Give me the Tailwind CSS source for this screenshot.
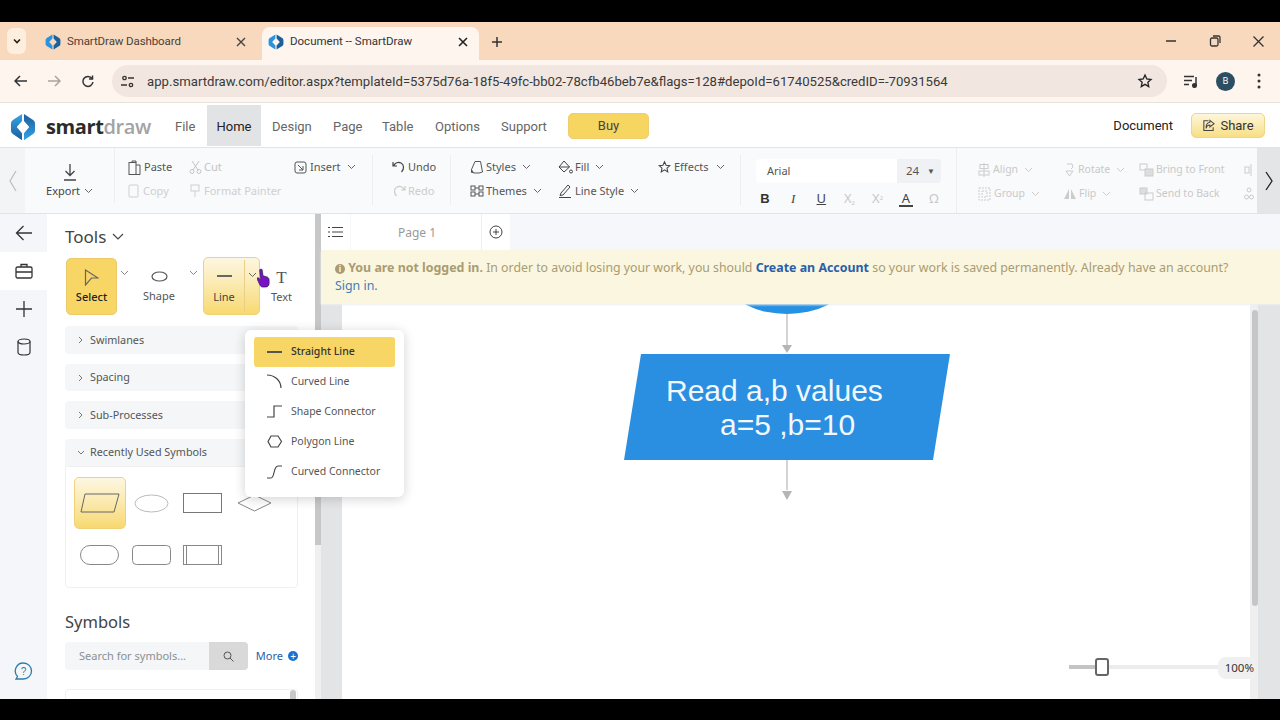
<!DOCTYPE html>
<html lang="en">
<head>
  <meta charset="UTF-8">
  <meta name="viewport" content="width=device-width, initial-scale=1.0">
  <title>Document -- SmartDraw</title>
  <script src="https://cdn.jsdelivr.net/npm/@tailwindcss/browser@4"></script>
</head>
<body class="bg-black">
  <div class="w-[1280px] h-[720px] overflow-hidden relative flex flex-col bg-black pt-[22px] pb-[21px] font-['Noto_Sans',sans-serif] text-[#444]">

    <!-- browser tabs -->
    <div class="h-[38px] shrink-0 bg-[#f8d9bd] flex items-end pl-[7px] text-[11.500px] text-[#333] font-['Roboto',sans-serif]">
      <div class="w-[19px] h-[26px] mb-[6px] rounded-md bg-[#fdeedd] flex items-center justify-center">
        <svg width="10" height="10" viewBox="0 0 10 10" fill="none" stroke="#222" stroke-width="1.600"><path d="M2 3.500l3 3 3-3"/></svg>
      </div>
      <div class="w-[236px] h-[33px] flex items-center pl-[19px] pr-[16px] pb-[4px]">
        <svg width="16" height="16" viewBox="0 0 27 32" preserveAspectRatio="none"><path d="M12.500 1 3 8Q1 9.500 1 12v8q0 2.500 2 4l9.500 7v-8L7 16l5.500-7z" fill="#2b93dc"/><path d="M14.500 1 24 8q2 1.500 2 4v8q0 2.500-2 4l-9.500 7v-8L20 16l-5.500-7z" fill="#1c5f9f"/></svg>
        <span class="ml-[6px] flex-1 text-[#4b4036] tracking-[-0.1px]">SmartDraw Dashboard</span>
        <svg width="10" height="10" viewBox="0 0 10 10" stroke="#444" stroke-width="1.400"><path d="M1 1l8 8M9 1l-8 8"/></svg>
      </div>
      <div class="w-[217px] h-[33px] bg-[#fdf5ee] rounded-t-lg flex items-center pl-[6px] pr-[11px] pb-[4px]">
        <svg width="16" height="16" viewBox="0 0 27 32" preserveAspectRatio="none"><path d="M12.500 1 3 8Q1 9.500 1 12v8q0 2.500 2 4l9.500 7v-8L7 16l5.500-7z" fill="#2b93dc"/><path d="M14.500 1 24 8q2 1.500 2 4v8q0 2.500-2 4l-9.500 7v-8L20 16l-5.500-7z" fill="#1c5f9f"/></svg>
        <span class="ml-[6px] flex-1">Document -- SmartDraw</span>
        <svg width="10" height="10" viewBox="0 0 10 10" stroke="#222" stroke-width="1.600"><path d="M1 1l8 8M9 1l-8 8"/></svg>
      </div>
      <div class="h-[33px] flex items-center ml-[12px] pb-[4px]">
        <svg width="12" height="12" viewBox="0 0 12 12" stroke="#333" stroke-width="1.500"><path d="M6 1v10M1 6h10"/></svg>
      </div>
      <div class="ml-auto h-[38px] flex items-center">
        <svg class="mr-[33px]" width="10" height="2" viewBox="0 0 10 2"><path d="M0 1h10" stroke="#333" stroke-width="1.500"/></svg>
        <svg class="mr-[32px]" width="12" height="12" viewBox="0 0 12 12" fill="none" stroke="#333" stroke-width="1.300"><rect x="1.500" y="3" width="7.500" height="8" rx="1.500"/><path d="M4 1h5.500a1.500 1.500 0 0 1 1.500 1.500V8"/></svg>
        <svg class="mr-[16px]" width="11" height="11" viewBox="0 0 11 11" stroke="#333" stroke-width="1.300"><path d="M.5.500l10 10M10.500.500l-10 10"/></svg>
      </div>
    </div>

    <!-- address bar -->
    <div class="h-[43px] shrink-0 bg-[#fdf5ee] flex items-center border-b border-[#e6e2de] pl-[14px]">
      <svg width="13" height="12" viewBox="0 0 13 12" fill="none" stroke="#333" stroke-width="1.500"><path d="M13 6H1.500M6 1 1 6l5 5"/></svg>
      <svg class="ml-[21px]" width="13" height="12" viewBox="0 0 13 12" fill="none" stroke="#a9a4a0" stroke-width="1.500"><path d="M0 6h11.500M7 1l5 5-5 5"/></svg>
      <svg class="ml-[20px]" width="13" height="13" viewBox="0 0 13 13" fill="none" stroke="#333" stroke-width="1.500"><path d="M11 3.500a5 5 0 1 0 .9 3.500"/><path d="M11.500.500v3.500H8"/></svg>
      <div class="ml-[18px] w-[1055px] h-[32px] rounded-full bg-[#f1e7e0] flex items-center pl-[9px] pr-[14px] text-[13.170px] text-[#3a3a3a] font-['Roboto',sans-serif]">
        <svg width="13" height="13" viewBox="0 0 13 13" fill="none" stroke="#333" stroke-width="1.300"><circle cx="3.500" cy="3" r="1.700"/><path d="M7 3h6M0 10h6"/><circle cx="10" cy="10" r="1.700"/></svg>
        <span class="ml-[13px] flex-1 pt-[1px]">app.smartdraw.com/editor.aspx?templateId=5375d76a-18f5-49fc-bb02-78cfb46beb7e&amp;flags=128#depoId=61740525&amp;credID=-70931564</span>
        <svg width="16" height="16" viewBox="0 0 24 24" fill="none" stroke="#222" stroke-width="2"><path d="M12 3l2.700 6 6.300.7-4.700 4.300 1.300 6.500L12 17l-5.600 3.500L7.700 14 3 9.700 9.300 9z"/></svg>
      </div>
      <svg class="ml-[17px]" width="15" height="13" viewBox="0 0 15 13" stroke="#333" stroke-width="1.500" fill="none"><path d="M0 1.500h10M0 5.500h8M0 9.500h5M12 2v8"/><circle cx="10.500" cy="10.500" r="1.800" fill="#333"/></svg>
      <div class="ml-[17px] w-[19px] h-[19px] rounded-full bg-[#2c4e63] text-white text-[9px] flex items-center justify-center">B</div>
      <svg class="ml-[22px]" width="4" height="16" viewBox="0 0 4 16" fill="#333"><circle cx="2" cy="2" r="1.500"/><circle cx="2" cy="8" r="1.500"/><circle cx="2" cy="14" r="1.500"/></svg>
    </div>

    <!-- app menu -->
    <div class="h-[45px] shrink-0 bg-white flex pt-[2px] pb-[1px] border-b border-[#e4e4e4] text-[13px] text-[#666] font-['Roboto',sans-serif]">
      <div class="w-[175px] flex items-center pl-[10px] pt-[2px]">
        <svg width="26" height="28" viewBox="0 0 27 32" preserveAspectRatio="none">
          <defs>
            <linearGradient id="logoLeft" x1="0" y1="0" x2="0" y2="1"><stop offset="0" stop-color="#35a4e8"/><stop offset="1" stop-color="#1b5c9c"/></linearGradient>
            <linearGradient id="logoRight" x1="0" y1="0" x2="0" y2="1"><stop offset="0" stop-color="#1b5c9c"/><stop offset="1" stop-color="#35a4e8"/></linearGradient>
          </defs>
          <path d="M12.500 1 3 8Q1 9.500 1 12v8q0 2.500 2 4l9.500 7v-8L7 16l5.500-7z" fill="url(#logoLeft)"/>
          <path d="M14.500 1 24 8q2 1.500 2 4v8q0 2.500-2 4l-9.500 7v-8L20 16l-5.500-7z" fill="url(#logoRight)"/>
        </svg>
        <span class="ml-[10px] text-[20px] font-bold leading-none font-['Open_Sans',sans-serif] tracking-[-0.4px] text-[#2b2b2b]">smart<span class="text-[#a3a3a3] font-semibold">draw</span></span>
      </div>
      <div class="w-[32px] flex items-center pt-[2px]">File</div>
      <div class="w-[54px] flex items-center justify-center pt-[2px] bg-[#e2e3e5] text-[#222]">Home</div>
      <div class="w-[72px] flex items-center pl-[11px] pt-[2px]">Design</div>
      <div class="w-[49px] flex items-center pt-[2px]">Page</div>
      <div class="w-[53px] flex items-center pt-[2px]">Table</div>
      <div class="w-[66px] flex items-center pt-[2px]">Options</div>
      <div class="w-[67px] flex items-center pt-[2px]">Support</div>
      <div class="flex items-center"><div class="w-[81px] h-[26px] rounded-[5px] bg-[#f6d560] border border-[#f0cd6e] flex items-center justify-center text-[#444]">Buy</div></div>
      <div class="ml-auto flex items-center text-[#222]">Document</div>
      <div class="flex items-center ml-[18px] mr-[15px]">
        <div class="w-[74px] h-[25px] rounded-[5px] bg-gradient-to-b from-[#fdf6dc] to-[#f8de82] border border-[#eed687] flex items-center justify-center gap-[5px] text-[#333]">
          <svg width="13" height="13" viewBox="0 0 14 14" fill="none" stroke="#444" stroke-width="1.100"><path d="M7 2H2v10.500h10V9"/><path d="M8.500 1.500 13 5 8.500 8.500V6.500C6 6.500 5 8 4.500 10 4 6.500 5.500 3.800 8.500 3.500z"/></svg>Share
        </div>
      </div>
    </div>

    <!-- ribbon -->
    <div class="h-[66px] shrink-0 bg-[#f9fafb] flex border-b border-[#e4e4e4] text-[11px] text-[#444]">
      <div class="w-[25px] bg-[#f3f4f6] flex items-center justify-center">
        <svg width="8" height="22" viewBox="0 0 8 22" fill="none" stroke="#bbb" stroke-width="1.200"><path d="M7 1 1 11l6 10"/></svg>
      </div>
      <div class="w-[90px] flex flex-col items-center pt-[15px] border-r border-[#eeeeee] mb-[10px]">
        <svg width="14" height="18" viewBox="0 0 14 18" fill="none" stroke="#444" stroke-width="1.300"><path d="M7 1v11M2.500 8 7 12.500 11.500 8M1 17h12"/></svg>
        <span class="mt-[2px] flex items-center gap-[4px]">Export <svg width="9" height="6" viewBox="0 0 9 6" fill="none" stroke="#666"><path d="M1 1l3.500 3.500L8 1"/></svg></span>
      </div>
      <!-- paste group -->
      <div class="w-[258px] flex border-r border-[#eeeeee] mt-[7px] mb-[8px]">
        <div class="w-[179px] grid grid-cols-[61px_1fr] grid-rows-[24px_24px] pl-[13px]">
          <div class="flex items-center gap-[3px] text-[#555]"><svg width="13" height="15" viewBox="0 0 13 15" fill="none" stroke="#555" stroke-width="1"><rect x="1" y="2.500" width="7" height="12"/><path d="M4 2.500V1h4v1.500M8 5h4v9.500H8"/></svg>Paste</div>
          <div class="flex items-center gap-[2px] text-[#c4c4c4]"><svg width="13" height="14" viewBox="0 0 13 14" fill="none" stroke="#c4c4c4"><circle cx="3" cy="11.500" r="2"/><circle cx="10" cy="11.500" r="2"/><path d="M4 10 10 1M9 10 3 1"/></svg>Cut</div>
          <div class="flex items-center gap-[4px] text-[#cfcfcf]"><svg width="11" height="14" viewBox="0 0 11 14" fill="none" stroke="#cfcfcf"><rect x="1" y="1" width="9" height="12" rx="1"/></svg>Copy</div>
          <div class="flex items-center gap-[4px] text-[#cfcfcf] ml-[1px]"><svg width="10" height="14" viewBox="0 0 10 14" fill="none" stroke="#cfcfcf"><rect x="1" y="1" width="8" height="6"/><path d="M5 7v6"/></svg>Format Painter</div>
        </div>
        <div class="h-[24px] flex items-center gap-[3px] text-[#555]">
          <svg width="13" height="13" viewBox="0 0 13 13" fill="none" stroke="#555"><rect x="1" y="1" width="11" height="11" rx="2"/><path d="M4 4l5 5M9 5v4H5"/></svg>Insert
          <svg class="ml-[3px]" width="9" height="6" viewBox="0 0 9 6" fill="none" stroke="#666"><path d="M1 1l3.500 3.500L8 1"/></svg>
        </div>
      </div>
      <!-- undo -->
      <div class="w-[78px] flex flex-col pl-[19px] border-r border-[#eeeeee] mt-[7px] mb-[8px]">
        <div class="h-[24px] flex items-center gap-[2px] text-[#555]"><svg width="14" height="14" viewBox="0 0 14 14" fill="none" stroke="#444" stroke-width="1.200"><path d="M1 2v4h4M1.500 6C3 3 6 1.500 9 3c3 1.500 3.500 6 .500 9"/></svg>Undo</div>
        <div class="h-[24px] flex items-center gap-[2px] text-[#cccccc]"><svg width="14" height="14" viewBox="0 0 14 14" fill="none" stroke="#ccc" stroke-width="1.200"><path d="M13 2v4H9M12.500 6C11 3 8 1.500 5 3 2 4.500 1.500 9 4.500 12"/></svg>Redo</div>
      </div>
      <!-- styles -->
      <div class="w-[290px] grid grid-cols-[88px_99px_1fr] grid-rows-[24px_24px] pl-[19px] mt-[7px] mb-[8px] border-r border-[#eeeeee] text-[#555]">
        <div class="flex items-center gap-[2px]"><svg width="14" height="14" viewBox="0 0 14 14" fill="none" stroke="#555"><path d="M5 1.500h5.500L12.500 12 9 13H3.500L1.500 9.500z"/><path d="M1.500 9.500v3h2"/></svg>Styles<svg class="ml-[4px]" width="9" height="6" viewBox="0 0 9 6" fill="none" stroke="#666"><path d="M1 1l3.500 3.500L8 1"/></svg></div>
        <div class="flex items-center gap-[2px]"><svg width="15" height="14" viewBox="0 0 15 14" fill="none" stroke="#444"><path d="M6 1 1 7l5 5 5.500-5z"/><path d="M1 7h10.500"/><circle cx="13" cy="11.500" r="1.500"/></svg>Fill<svg class="ml-[4px]" width="9" height="6" viewBox="0 0 9 6" fill="none" stroke="#666"><path d="M1 1l3.500 3.500L8 1"/></svg></div>
        <div class="flex items-center gap-[2px]"><svg width="15" height="14" viewBox="0 0 24 24" fill="none" stroke="#444" stroke-width="1.800"><path d="M12 3l2.700 6 6.300.7-4.700 4.300 1.300 6.500L12 17l-5.600 3.500L7.700 14 3 9.700 9.300 9z"/></svg>Effects<svg class="ml-[6px]" width="9" height="6" viewBox="0 0 9 6" fill="none" stroke="#666"><path d="M1 1l3.500 3.500L8 1"/></svg></div>
        <div class="flex items-center gap-[2px]"><svg width="14" height="14" viewBox="0 0 14 14" fill="none" stroke="#555"><rect x="1" y="2" width="4" height="4"/><rect x="9" y="2" width="4" height="4"/><rect x="1" y="8" width="4" height="4"/><rect x="9" y="8" width="4" height="4"/><path d="M5 4h4M5 10h4"/></svg>Themes<svg class="ml-[4px]" width="9" height="6" viewBox="0 0 9 6" fill="none" stroke="#666"><path d="M1 1l3.500 3.500L8 1"/></svg></div>
        <div class="flex items-center gap-[2px]"><svg width="15" height="14" viewBox="0 0 15 14" fill="none" stroke="#444"><path d="M3 9 10 1l2 2-7 8-3 .5zM1 13.500h12"/></svg>Line Style<svg class="ml-[4px]" width="9" height="6" viewBox="0 0 9 6" fill="none" stroke="#666"><path d="M1 1l3.500 3.500L8 1"/></svg></div>
      </div>
      <!-- font -->
      <div class="w-[216px] pl-[15px] pt-[11px] border-r border-[#eeeeee] text-[#555]">
        <div class="flex h-[24px] w-[185px] items-center">
          <div class="w-[141px] h-full bg-white rounded-l-[4px] flex items-center pl-[11px]">Arial</div>
          <div class="w-[44px] h-full bg-[#eff1f4] rounded-r-[4px] flex items-center pl-[9px] pr-[6px] justify-between text-[11.500px]">24<span class="text-[8px]">▼</span></div>
        </div>
        <div class="flex mt-[6px] h-[20px] w-[185px] items-center justify-between pl-[2px] text-[13px]">
          <span class="w-[14px] text-center font-bold font-['Liberation_Sans',sans-serif] text-[#333]">B</span>
          <span class="w-[14px] text-center italic font-['Liberation_Serif',serif] text-[#444]">I</span>
          <span class="w-[14px] text-center underline text-[#444]">U</span>
          <span class="w-[14px] text-center text-[#c8c8c8]">X<sub class="text-[6px]">2</sub></span>
          <span class="w-[14px] text-center text-[#c8c8c8]">X<sup class="text-[6px]">2</sup></span>
          <span class="w-[14px] text-center text-[#444] border-b-2 border-[#444] leading-[14px]">A</span>
          <span class="w-[14px] text-center text-[#c8c8c8]">Ω</span>
        </div>
      </div>
      <!-- arrange, disabled -->
      <div class="flex-1 grid grid-cols-[86px_75px_105px_1fr] grid-rows-[24px_24px] pl-[21px] pt-[10px] text-[#c9c9c9] text-[10.500px] overflow-hidden">
        <div class="flex items-center gap-[3px]"><svg width="12" height="14" viewBox="0 0 12 14" fill="none" stroke="#ccc"><rect x="2" y="1.500" width="8" height="4"/><rect x="1" y="8" width="10" height="4"/><path d="M6 0v14"/></svg>Align<svg class="ml-[3px]" width="9" height="6" viewBox="0 0 9 6" fill="none" stroke="#ccc"><path d="M1 1l3.500 3.500L8 1"/></svg></div>
        <div class="flex items-center gap-[3px]"><svg width="11" height="14" viewBox="0 0 11 14" fill="none" stroke="#ccc"><path d="M3 1h5l1 3-2 2"/><path d="M2 8l3.500 5L9 8z"/></svg>Rotate<svg class="ml-[3px]" width="9" height="6" viewBox="0 0 9 6" fill="none" stroke="#ccc"><path d="M1 1l3.500 3.500L8 1"/></svg></div>
        <div class="flex items-center gap-[2px]"><svg width="15" height="14" viewBox="0 0 15 14" fill="none" stroke="#ccc"><rect x="1" y="1" width="7" height="6"/><rect x="6" y="6" width="8" height="7" fill="#ddd"/></svg>Bring to Front</div>
        <div class="flex items-center"><svg width="10" height="14" viewBox="0 0 10 14" fill="none" stroke="#ccc"><rect x="1" y="4" width="4" height="6"/><path d="M7 1v12"/></svg></div>
        <div class="flex items-center gap-[3px]"><svg width="13" height="14" viewBox="0 0 13 14" fill="none" stroke="#ccc" stroke-dasharray="2 1"><rect x="1" y="1" width="11" height="12"/><rect x="4" y="4" width="5" height="6"/></svg>Group<svg class="ml-[3px]" width="9" height="6" viewBox="0 0 9 6" fill="none" stroke="#ccc"><path d="M1 1l3.500 3.500L8 1"/></svg></div>
        <div class="flex items-center gap-[3px]"><svg width="12" height="12" viewBox="0 0 12 12" fill="#ccc"><path d="M5 1v10H0zM7 1l5 10H7z"/></svg>Flip<svg class="ml-[3px]" width="9" height="6" viewBox="0 0 9 6" fill="none" stroke="#ccc"><path d="M1 1l3.500 3.500L8 1"/></svg></div>
        <div class="flex items-center gap-[2px]"><svg width="15" height="14" viewBox="0 0 15 14" fill="none" stroke="#ccc"><rect x="1" y="1" width="7" height="6" fill="#ddd"/><rect x="6" y="6" width="8" height="7"/></svg>Send to Back</div>
        <div class="flex items-center"><svg width="10" height="14" viewBox="0 0 10 14" fill="none" stroke="#ccc"><circle cx="5" cy="3" r="2"/><circle cx="2.500" cy="10" r="2"/><circle cx="7.500" cy="10" r="2"/></svg></div>
      </div>
      <div class="w-[23px] bg-[#e4e5e7] flex items-center justify-center">
        <svg width="8" height="20" viewBox="0 0 8 20" fill="none" stroke="#222" stroke-width="1.300"><path d="M1 1l6 9-6 9"/></svg>
      </div>
    </div>

    <!-- work area -->
    <div class="flex-1 flex min-h-0 relative bg-white">
      <!-- rail -->
      <div class="w-[47px] bg-[#f4f6f9] flex flex-col shrink-0">
        <div class="h-[38px] flex items-center justify-center"><svg width="18" height="16" viewBox="0 0 18 16" fill="none" stroke="#333" stroke-width="1.300"><path d="M17 8H1.500M8.500 1l-7 7 7 7"/></svg></div>
        <div class="h-[38px] bg-white flex items-center justify-center"><svg width="18" height="16" viewBox="0 0 18 16" fill="none" stroke="#333" stroke-width="1.300"><rect x="1" y="4" width="16" height="11" rx="1.500"/><path d="M6 4V1.500h6V4M1 9h16"/></svg></div>
        <div class="h-[38px] flex items-center justify-center"><svg width="16" height="16" viewBox="0 0 16 16" stroke="#333" stroke-width="1.300"><path d="M8 0v16M0 8h16"/></svg></div>
        <div class="h-[38px] flex items-center justify-center"><svg width="14" height="18" viewBox="0 0 14 18" fill="none" stroke="#333" stroke-width="1.200"><ellipse cx="7" cy="3.500" rx="6" ry="2.500"/><path d="M1 3.500v11c0 1.500 3 2.500 6 2.500s6-1 6-2.500v-11"/></svg></div>
        <div class="mt-auto h-[37px] flex justify-center"><svg width="19" height="19" viewBox="0 0 19 19" fill="none" stroke="#2b7ca8" stroke-width="1.300"><path d="M9.500 1a8 8 0 0 1 0 16H2l1.500-2.500A8 8 0 0 1 9.500 1z"/><text x="9.500" y="13" font-size="10" fill="#2b7ca8" stroke="none" text-anchor="middle" font-family="Liberation Sans">?</text></svg></div>
      </div>

      <!-- tools panel -->
      <div class="w-[268px] bg-white shrink-0 pl-[18px] pr-[17px] overflow-hidden">
        <div class="h-[44px] flex items-center pt-[2px] text-[17px] text-[#444] gap-[6px]">Tools <svg width="12" height="8" viewBox="0 0 12 8" fill="none" stroke="#444" stroke-width="1.200"><path d="M1 1l5 5 5-5"/></svg></div>
        <div class="flex h-[58px] text-[11px] pl-[1px]">
          <div class="w-[51px] shrink-0 h-[57px] bg-[#f7d666] border border-[#edc96b] rounded-[5px] flex flex-col items-center pt-[10px] text-[#222] font-medium">
            <svg width="15" height="17" viewBox="0 0 15 17" fill="none" stroke="#666" stroke-width="1.200"><path d="M1.500 1 14 9H7.500l-6 7z"/></svg><span class="mt-[3px]">Select</span>
          </div>
          <svg class="ml-[3px] mt-[12px] shrink-0" width="9" height="6" viewBox="0 0 9 6" fill="none" stroke="#888"><path d="M1 1l3.500 3.500L8 1"/></svg>
          <div class="w-[60px] shrink-0 flex flex-col items-center pt-[13px] text-[#555]">
            <svg width="17" height="11" viewBox="0 0 17 11" fill="none" stroke="#555" stroke-width="1.200"><ellipse cx="8.500" cy="5.500" rx="7.500" ry="4.500"/></svg><span class="mt-[6px]">Shape</span>
          </div>
          <svg class="mt-[12px] shrink-0" width="9" height="6" viewBox="0 0 9 6" fill="none" stroke="#888"><path d="M1 1l3.500 3.500L8 1"/></svg>
          <div class="ml-[5px] w-[57px] shrink-0 h-[58px] -mt-[1px] bg-gradient-to-b from-[#fdf7e2] to-[#f8d96f] border border-[#efd27a] rounded-[5px] flex text-[#444]">
            <div class="w-[41px] border-r border-[#e8cf86] flex flex-col items-center pt-[15px] my-[2px]">
              <div class="w-[15px] h-[2px] bg-[#666]"></div><span class="mt-[12px]">Line</span>
            </div>
            <svg class="ml-[3px] mt-[14px]" width="9" height="6" viewBox="0 0 9 6" fill="none" stroke="#666"><path d="M1 1l3.500 3.500L8 1"/></svg>
          </div>
          <div class="w-[43px] shrink-0 flex flex-col items-center pt-[10px] text-[#555]">
            <span class="text-[17px] leading-[20px] font-['Liberation_Serif',serif]">T</span><span class="mt-[1px]">Text</span>
          </div>
        </div>
        <div class="mt-[10px] flex flex-col gap-[10px] text-[10.800px] text-[#555]">
          <div class="h-[28px] bg-[#f4f6f8] rounded flex items-center pl-[13px] gap-[7px]"><svg width="5" height="8" viewBox="0 0 5 8" fill="none" stroke="#777"><path d="M1 1l3 3-3 3"/></svg>Swimlanes</div>
          <div class="h-[27px] bg-[#f4f6f8] rounded flex items-center pl-[13px] gap-[7px]"><svg width="5" height="8" viewBox="0 0 5 8" fill="none" stroke="#777"><path d="M1 1l3 3-3 3"/></svg>Spacing</div>
          <div class="h-[28px] bg-[#f4f6f8] rounded flex items-center pl-[13px] gap-[7px]"><svg width="5" height="8" viewBox="0 0 5 8" fill="none" stroke="#777"><path d="M1 1l3 3-3 3"/></svg>Sub-Processes</div>
          <div class="h-[27px] bg-[#f4f6f8] rounded-t flex items-center pl-[12px] gap-[5px]"><svg width="8" height="5" viewBox="0 0 8 5" fill="none" stroke="#777"><path d="M1 1l3 3 3-3"/></svg>Recently Used Symbols</div>
        </div>
        <div class="w-[233px] h-[122px] border border-[#f0f0f0] rounded-b pl-[8px] pt-[10px]">
          <div class="flex items-center h-[52px]">
            <div class="w-[52px] h-[52px] bg-gradient-to-b from-[#fdf7e2] to-[#f8d96f] border border-[#efd27a] rounded-[5px] flex items-center justify-center">
              <svg width="40" height="20" viewBox="0 0 40 20" fill="none" stroke="#666" stroke-width="1"><path d="M5 1h34l-5 18H1z"/></svg>
            </div>
            <svg class="ml-[8px]" width="35" height="19" viewBox="0 0 35 19" fill="none" stroke="#bbb"><ellipse cx="17.500" cy="9.500" rx="16.500" ry="8.500"/></svg>
            <svg class="ml-[14px]" width="39" height="20" viewBox="0 0 39 20" fill="none" stroke="#777"><rect x=".5" y=".5" width="38" height="19"/></svg>
            <svg class="ml-[15px]" width="35" height="18" viewBox="0 0 35 18" fill="none" stroke="#888"><path d="M17.500 1 34 9 17.500 17 1 9z"/></svg>
          </div>
          <div class="flex items-center mt-[16px] pl-[6px]">
            <svg width="39" height="20" viewBox="0 0 39 20" fill="none" stroke="#888"><rect x=".5" y=".5" width="38" height="19" rx="9.500"/></svg>
            <svg class="ml-[13px]" width="39" height="20" viewBox="0 0 39 20" fill="none" stroke="#888"><rect x=".5" y=".5" width="38" height="19" rx="4"/></svg>
            <svg class="ml-[12px]" width="39" height="20" viewBox="0 0 39 20" fill="none" stroke="#888"><rect x=".5" y=".5" width="38" height="19"/><path d="M3.500 0v20M35.500 0v20"/></svg>
          </div>
        </div>
        <div class="h-[54px] pt-[22px] text-[16.500px] leading-[24px] text-[#444]">Symbols</div>
        <div class="flex items-center h-[28px] text-[11px]">
          <div class="w-[145px] h-full bg-[#f4f6f8] rounded-l flex items-center pl-[14px] text-[#8a8f94]">Search for symbols...</div>
          <div class="w-[39px] h-full bg-[#d9d9d9] rounded-r flex items-center justify-center"><svg width="11" height="11" viewBox="0 0 11 11" fill="none" stroke="#555"><circle cx="4.500" cy="4.500" r="3.500"/><path d="M7 7l3.500 3.500"/></svg></div>
          <div class="ml-[8px] text-[#2a5ea8] flex items-center gap-[5px]">More <span class="w-[10px] h-[10px] rounded-full bg-[#1f6fd0] text-white flex items-center justify-center text-[10px] leading-none">+</span></div>
        </div>
        <div class="mt-[19px] w-[233px] h-[30px] border border-[#f0f0f0] rounded flex justify-end pr-[1px]">
          <div class="w-[6px] h-full bg-[#c6c7c9] rounded-t"></div>
        </div>
      </div>

      <!-- panel scrollbar -->
      <div class="w-[6px] shrink-0 bg-[#f0f0f1] h-full">
        <div class="w-[6px] h-[331px] bg-[#c6c7c9]"></div>
      </div>

      <!-- canvas column -->
      <div class="flex-1 flex flex-col min-w-0 relative">
        <div class="h-[36px] shrink-0 flex bg-[#f6f7fa] text-[12px]">
          <div class="w-[29px] bg-white flex items-center justify-center"><svg width="15" height="12" viewBox="0 0 15 12" stroke="#444" stroke-width="1.100"><path d="M4 1.500h11M4 6h11M4 10.500h11M0 1.500h2M0 6h2M0 10.500h2"/></svg></div>
          <div class="w-[131px] ml-[1px] pt-[1px] pl-[2px] bg-white border-r border-[#eeeeee] flex items-center justify-center text-[#999]">Page 1</div>
          <div class="w-[28px] bg-white flex items-center justify-center"><svg width="14" height="14" viewBox="0 0 14 14" fill="none" stroke="#444"><circle cx="7" cy="7" r="6"/><path d="M7 4v6M4 7h6"/></svg></div>
        </div>
        <div class="h-[54px] shrink-0 bg-[#fbf6df] pl-[14px] pt-[9px] pr-[40px] text-[12.400px] leading-[18px] text-[#a99c72] relative z-10 shadow-[0_1px_2px_#eeeeee]">
          <span class="font-bold"><span class="inline-block w-[10px] h-[10px] rounded-full bg-[#a99c72] text-white text-[8px] leading-[10px] text-center">i</span> You are not logged in.</span> <span class="text-[12.300px]">In order to avoid losing your work, you should</span> <span class="font-bold text-[#2a5ea8]">Create an Account</span> so your work is saved permanently. Already have an account? <span class="text-[#3f7fb8]">Sign in.</span>
        </div>
        <div class="flex-1 flex min-h-0">
          <div class="w-[21px] bg-[#e3e4e6] shrink-0"></div>
          <div class="flex-1 relative bg-white">
            <!-- flowchart -->
            <svg class="absolute left-0 top-0" width="908" height="395" viewBox="0 0 908 395">
              <ellipse cx="445" cy="-18" rx="55" ry="28" fill="#2491e2"/>
              <path d="M445 10v32" stroke="#c4c4c4" stroke-width="1.500"/>
              <path d="M440 41h10l-5 8z" fill="#b5b5b5"/>
              <path d="M299 50h309l-17 106H282z" fill="#2a8fe0"/>
              <path d="M445 156v30" stroke="#c4c4c4" stroke-width="1.500"/>
              <path d="M440 187h10l-5 9z" fill="#b5b5b5"/>
              <text x="324" y="97" font-size="30" fill="#f2f8fd" font-family="Liberation Sans">Read a,b values</text>
              <text x="378" y="131" font-size="30" fill="#f2f8fd" font-family="Liberation Sans">a=5 ,b=10</text>
            </svg>
            <!-- zoom -->
            <div class="absolute left-[727px] top-[361px] w-[150px] h-[4px] bg-[#ececec]"></div>
            <div class="absolute left-[727px] top-[361px] w-[28px] h-[4px] bg-[#c4c4c4]"></div>
            <div class="absolute left-[753px] top-[354px] w-[14px] h-[18px] bg-white border-2 border-[#666] rounded-[3px]"></div>
          </div>
          <div class="w-[8px] bg-[#efefef] shrink-0"><div class="w-[6px] ml-[2px] mt-[6px] h-[296px] bg-[#c6c6c8] rounded-full"></div></div>
          <div class="w-[22px] bg-[#e3e4e6] shrink-0"></div>
        </div>
        <div class="absolute left-[897px] top-[443px] w-[37px] h-[22px] bg-[#f0f0f0] rounded-l-lg z-10 flex items-center justify-end pr-[1px] text-[11.500px] text-[#333]">100%</div>
      </div>

      <!-- line menu -->
      <div class="absolute left-[245px] top-[116px] w-[159px] h-[167px] bg-white rounded-md shadow-[0_2px_12px_rgba(0,0,0,0.18)] px-[9px] pt-[7px] text-[10.500px] text-[#555]">
        <div class="h-[30px] pb-[1px] bg-[#f7d666] rounded-[3px] flex items-center pl-[13px] text-[#333] font-medium"><span class="w-[15px] h-[2px] bg-[#555] mr-[9px]"></span>Straight Line</div>
        <div class="h-[30px] pb-[1px] flex items-center pl-[13px]"><svg class="mr-[9px]" width="15" height="15" viewBox="0 0 15 15" fill="none" stroke="#444" stroke-width="1.200"><path d="M0 1c7 0 14 5 14 13"/></svg>Curved Line</div>
        <div class="h-[30px] pb-[1px] flex items-center pl-[13px]"><svg class="mr-[9px]" width="15" height="13" viewBox="0 0 15 13" fill="none" stroke="#444" stroke-width="1.200"><path d="M0 12h7V1h8"/></svg>Shape Connector</div>
        <div class="h-[30px] pb-[1px] flex items-center pl-[13px]"><svg class="mr-[9px]" width="15" height="13" viewBox="0 0 15 13" fill="none" stroke="#444" stroke-width="1.200"><path d="M4 1h7l3.500 5.500L11 12H4L1 6.500z"/></svg>Polygon Line</div>
        <div class="h-[30px] pb-[1px] flex items-center pl-[13px]"><svg class="mr-[9px]" width="15" height="14" viewBox="0 0 15 14" fill="none" stroke="#444" stroke-width="1.200"><path d="M0 13h4C8 13 6 1 11 1h4"/></svg>Curved Connector</div>
      </div>

      <!-- cursor -->
      <svg class="absolute left-[257px] top-[54px]" width="13" height="20" viewBox="0 0 15 22"><path d="M3 1.500c1-1 2.500-1 3 0l1 7 4 1c2 .5 3 2 3 4v4c0 2-2 4-4 4H7c-2 0-3-1-4-3L0 12c-.5-1 1-2 2-1l2 2z" fill="#7a12c8" stroke="#222" stroke-width=".7"/></svg>
    </div>
  </div>
</body>
</html>
